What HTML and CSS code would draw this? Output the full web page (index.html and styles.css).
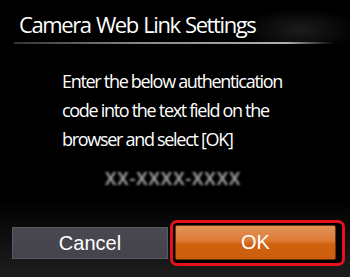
FILE: index.html
```html
<!DOCTYPE html>
<html lang="en">
<head>
  <meta charset="UTF-8" />
  <title>Camera Web Link Settings</title>
  <link rel="stylesheet" href="styles.css">
</head>
<body>
  <div class="screen">
    <div class="header">
      <h1>Camera Web Link Settings</h1>
    </div>
    <div class="message">
      <p>Enter the below authentication<br>code into the text field on the<br>browser and select [OK]</p>
    </div>
    <div class="code">XX-XXXX-XXXX</div>
    <div class="buttons">
      <button class="btn cancel">Cancel</button>
      <div class="focus-ring">
        <button class="btn ok">OK</button>
      </div>
    </div>
  </div>
</body>
</html>
```

FILE: styles.css
```css
body {
  margin: 0;
  padding: 0;
  background-color: #000;
  font-family: 'Open Sans', sans-serif;
  color: white;
}

.screen {
  width: 350px;
  height: 277px;
  display: flex;
  flex-direction: column;
  background: linear-gradient(to bottom, #000 0, #000 200px, #1e1e1e 277px);
  overflow: hidden;
}

.header {
  position: relative;
  height: 44px;
  padding-left: 19px;
  background: radial-gradient(ellipse 60px 22px at 300px 30px, #1c1c1c, #000);
}

.header::after {
  content: "";
  position: absolute;
  left: 14px;
  right: 15px;
  bottom: 0;
  height: 2px;
  background: linear-gradient(to right, #333 0%, #8a8a8a 40%, #b0b0b0 85%, #000 100%);
}

.header h1 {
  margin: 0;
  padding-top: 9px;
  font-size: 22px;
  font-weight: normal;
  letter-spacing: -1.4px;
  word-spacing: 1px;
  line-height: 30px;
}

.message {
  padding: 23px 0 0 62px;
}

.message p {
  margin: 0;
  font-size: 18px;
  line-height: 29px;
  letter-spacing: -1.3px;
  word-spacing: 0;
}

.code {
  margin: 15px 0 0 105px;
  width: 150px;
  font-size: 17px;
  font-weight: bold;
  line-height: 20px;
  letter-spacing: 1px;
  color: #9a9a9a;
  filter: blur(1.2px);
}

.buttons {
  display: flex;
  align-items: center;
  gap: 2px;
  margin-top: 31px;
  padding-left: 12px;
}

.btn {
  border: none;
  padding: 0;
  color: white;
  font-family: 'Liberation Sans', Arial, sans-serif;
  font-size: 20px;
}

.cancel {
  width: 156px;
  height: 32px;
  background: linear-gradient(to bottom, #4a4952, #44434c);
  border: 1px solid #5b5a62;
}

.focus-ring {
  display: flex;
  border: 3px solid #e3121c;
  border-radius: 7px;
  padding: 2px 6px 3px 2px;
  background: #000;
}

.ok {
  width: 161px;
  height: 35px;
  border: 1px solid #6e340c;
  border-radius: 2px;
  background: linear-gradient(to bottom, #e39358 0%, #dc7a36 45%, #d0610f 55%, #cc5e0c 100%);
}
```
